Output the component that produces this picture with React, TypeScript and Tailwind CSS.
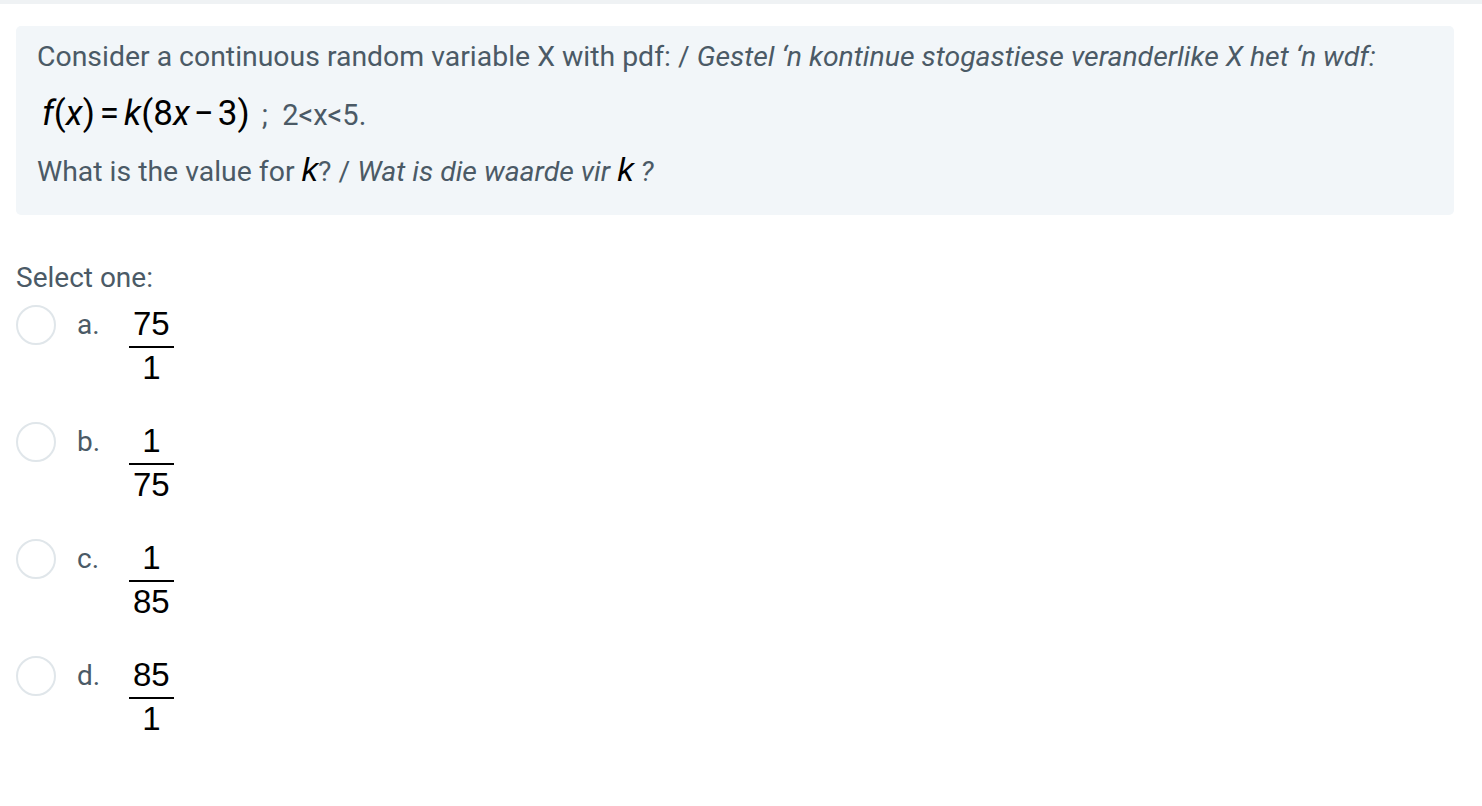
const txt = "text-[#4b5a66]";

function Frac({ num, den }: { num: string; den: string }) {
  return (
    <span className="mt-[4px] inline-flex flex-col items-center font-['Liberation_Sans',Arial,sans-serif] text-[33px] leading-none text-black">
      <span className="px-[5px] pb-[6px]">{num}</span>
      <span className="h-[2px] w-[45px] bg-black" />
      <span className="px-[5px] pt-[3px]">{den}</span>
    </span>
  );
}

const options = [
  { key: "a.", num: "75", den: "1" },
  { key: "b.", num: "1", den: "75" },
  { key: "c.", num: "1", den: "85" },
  { key: "d.", num: "85", den: "1" },
];

export default function App() {
  return (
    <div className={`min-h-[806px] bg-white font-['Roboto',sans-serif] ${txt}`}>
      <div className="h-[4px] bg-[#eff2f4]" />
      <div className="pl-4 pr-[28px] pt-[22px]">
        <div className="rounded-[5px] bg-[#f2f6f9] px-[21px] pt-[12px] pb-[24px] text-[28.4px]">
          <p className="leading-[38px]">
            Consider a continuous random variable X with pdf: /{" "}
            <em>Gestel ‘n kontinue stogastiese veranderlike X het ‘n wdf:</em>
          </p>
          <p className="mt-[19px] flex items-baseline leading-[38px]">
            <span className="ml-[5px] font-['Roboto',sans-serif] text-[35px] italic text-black">
              f<span className="not-italic">(</span>x<span className="not-italic">)</span>
              <span className="not-italic px-[5px]">=</span>k<span className="not-italic">(8</span>x
              <span className="not-italic px-[4px]">−</span>
              <span className="not-italic">3)</span>
            </span>
            <span className="ml-[12px] text-[29px]">;&nbsp; 2&lt;x&lt;5.</span>
          </p>
          <p className="mt-[17px] leading-[38px]">
            What is the value for{" "}
            <span className="font-['Liberation_Sans',sans-serif] text-[33px] font-medium italic text-black">k</span>? /{" "}
            <em>
              Wat is die waarde vir{" "}
              <span className="font-['Liberation_Sans',sans-serif] text-[33px] font-medium text-black">k</span> ?
            </em>
          </p>
        </div>

        <div className="mt-[44px] text-[28px] leading-[38px]">Select one:</div>

        <div className="mt-[6px] flex flex-col">
          {options.map((o) => (
            <div key={o.key} className="flex h-[117px] items-start">
              <span className="mt-[2px] h-[40px] w-[40px] shrink-0 rounded-full border-[2px] border-[#e0e6ea] bg-white" />
              <span className="ml-[21px] mt-[3px] w-[51px] text-[28px] leading-[38px]">{o.key}</span>
              <Frac num={o.num} den={o.den} />
            </div>
          ))}
        </div>
      </div>
    </div>
  );
}
